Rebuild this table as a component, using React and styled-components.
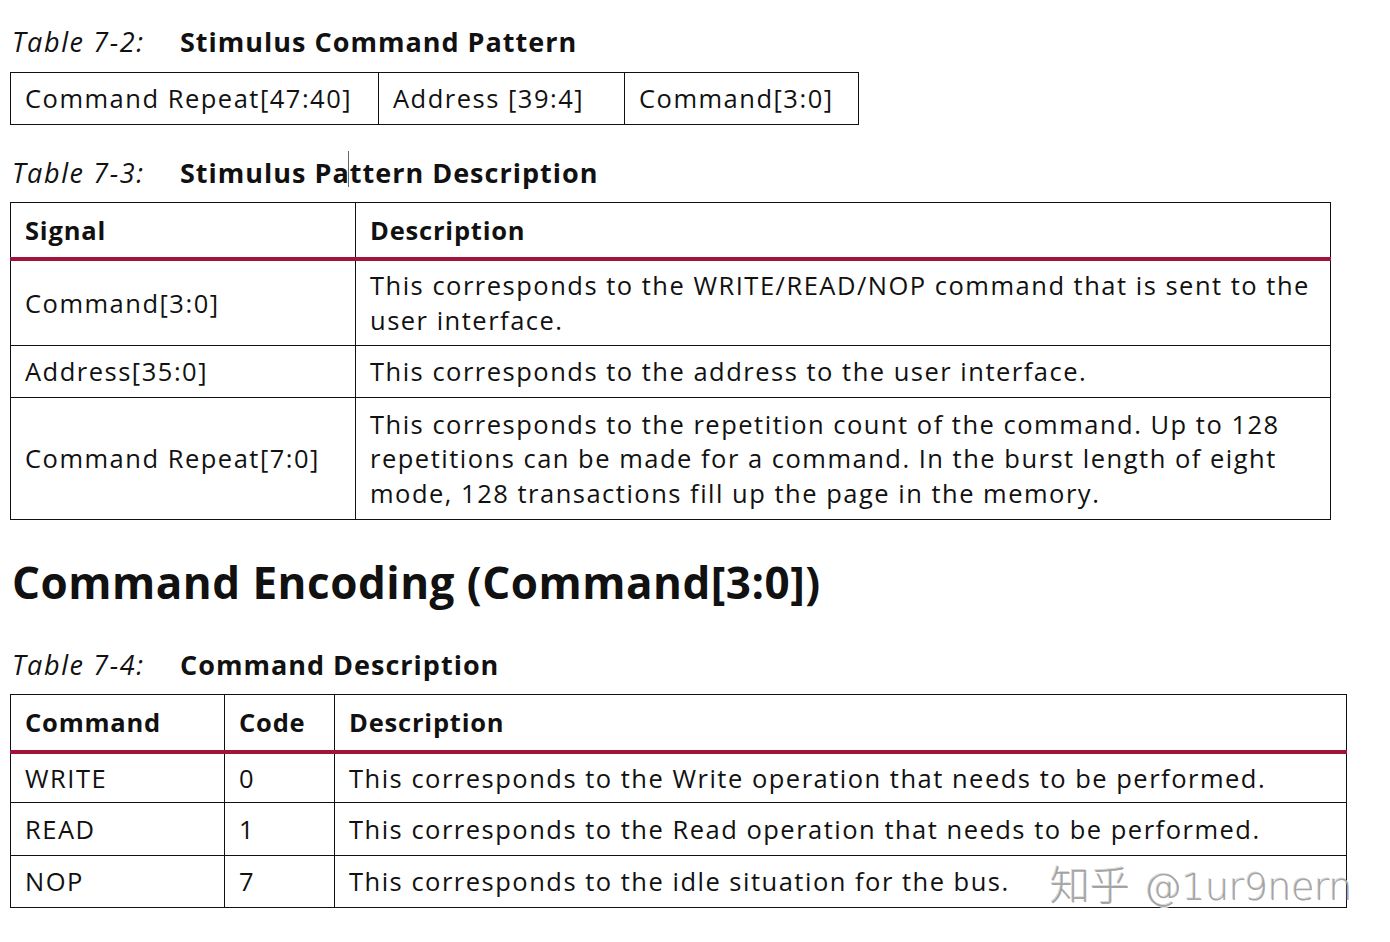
import React from "react";
import styled, { createGlobalStyle } from "styled-components";

const Global = createGlobalStyle`
  html, body { margin: 0; padding: 0; background: #ffffff; }
  body { font-family: "Open Sans", "Noto Sans", sans-serif; color: #111; }
`;

const Page = styled.div`
  position: relative;
  width: 1390px;
  height: 942px;
  box-sizing: border-box;
  padding: 24px 0 0 10px;
  overflow: hidden;
`;

const Caption = styled.div`
  display: flex;
  align-items: baseline;
  height: 36px;
  line-height: 36px;
  margin-top: ${(p) => p.$mt || 0}px;
  padding-left: 2px;
  font-size: 27px;
  position: relative;
`;

const CapNum = styled.span`
  font-style: italic;
  letter-spacing: 1.6px;
  width: 168px;
  flex: none;
`;

const CapTitle = styled.span`
  font-weight: 700;
  letter-spacing: 1px;
`;

const Caret = styled.span`
  position: absolute;
  left: 338px;
  top: -4px;
  width: 1px;
  height: 36px;
  background: #666;
`;

const Table = styled.table`
  border-collapse: collapse;
  table-layout: fixed;
  width: ${(p) => p.$w}px;
  margin-top: ${(p) => p.$mt || 0}px;
  font-size: 25.5px;
  letter-spacing: 1.5px;
`;

const Row = styled.tr`
  height: ${(p) => p.$h}px;
`;

const HeadRow = styled.tr`
  height: ${(p) => p.$h}px;
`;

const Cell = styled.td`
  border: 1px solid #111;
  padding: 0 6px 0 14px;
  vertical-align: middle;
  line-height: 34.5px;
  box-sizing: border-box;
  white-space: nowrap;
`;

const HeadCell = styled(Cell)`
  font-weight: 700;
  letter-spacing: 0.8px;
  border-bottom: 4px solid #a0143c;
`;

const Heading = styled.h1`
  margin: 34px 0 0 2px;
  font-size: 44px;
  line-height: 56px;
  font-weight: 700;
  letter-spacing: 0.5px;
`;

const Watermark = styled.div`
  position: absolute;
  left: 1050px;
  top: 858px;
  font-size: 40px;
  line-height: 50px;
  color: rgba(150, 150, 150, 0.85);
  font-family: "Noto Sans CJK SC", "DejaVu Sans", sans-serif;
  font-weight: 300;
  text-shadow: 1px 1px 0 rgba(255, 255, 255, 0.9), -1px -1px 0 rgba(120,120,120,0.3);
  white-space: nowrap;
  pointer-events: none;
`;

const WmLatin = styled.span`
  font-family: "DejaVu Sans", sans-serif;
  font-weight: 200;
  margin-left: 14px;
  letter-spacing: -0.5px;
  font-size: 38px;
`;

export default function App() {
  return (
    <>
      <Global />
      <Page>
        <Caption>
          <CapNum>Table 7-2:</CapNum>
          <CapTitle>Stimulus Command Pattern</CapTitle>
        </Caption>
        <Table $w={848} $mt={12}>
          <colgroup>
            <col style={{ width: 368 }} />
            <col style={{ width: 246 }} />
            <col style={{ width: 234 }} />
          </colgroup>
          <tbody>
            <Row $h={52}>
              <Cell>Command Repeat[47:40]</Cell>
              <Cell>Address [39:4]</Cell>
              <Cell>Command[3:0]</Cell>
            </Row>
          </tbody>
        </Table>

        <Caption $mt={30}>
          <CapNum>Table 7-3:</CapNum>
          <CapTitle>Stimulus Pattern Description</CapTitle>
          <Caret />
        </Caption>
        <Table $w={1320} $mt={11}>
          <colgroup>
            <col style={{ width: 345 }} />
            <col style={{ width: 975 }} />
          </colgroup>
          <tbody>
            <HeadRow $h={56}>
              <HeadCell>Signal</HeadCell>
              <HeadCell>Description</HeadCell>
            </HeadRow>
            <Row $h={87}>
              <Cell>Command[3:0]</Cell>
              <Cell>
                This corresponds to the WRITE/READ/NOP command that is sent to the
                <br />
                user interface.
              </Cell>
            </Row>
            <Row $h={52}>
              <Cell>Address[35:0]</Cell>
              <Cell>This corresponds to the address to the user interface.</Cell>
            </Row>
            <Row $h={122}>
              <Cell>Command Repeat[7:0]</Cell>
              <Cell>
                This corresponds to the repetition count of the command. Up to 128
                <br />
                repetitions can be made for a command. In the burst length of eight
                <br />
                mode, 128 transactions fill up the page in the memory.
              </Cell>
            </Row>
          </tbody>
        </Table>

        <Heading>Command Encoding (Command[3:0])</Heading>

        <Caption $mt={37}>
          <CapNum>Table 7-4:</CapNum>
          <CapTitle>Command Description</CapTitle>
        </Caption>
        <Table $w={1336} $mt={11}>
          <colgroup>
            <col style={{ width: 214 }} />
            <col style={{ width: 110 }} />
            <col style={{ width: 1012 }} />
          </colgroup>
          <tbody>
            <HeadRow $h={57}>
              <HeadCell>Command</HeadCell>
              <HeadCell>Code</HeadCell>
              <HeadCell>Description</HeadCell>
            </HeadRow>
            <Row $h={51}>
              <Cell>WRITE</Cell>
              <Cell>0</Cell>
              <Cell>This corresponds to the Write operation that needs to be performed.</Cell>
            </Row>
            <Row $h={53}>
              <Cell>READ</Cell>
              <Cell>1</Cell>
              <Cell>This corresponds to the Read operation that needs to be performed.</Cell>
            </Row>
            <Row $h={52}>
              <Cell>NOP</Cell>
              <Cell>7</Cell>
              <Cell>This corresponds to the idle situation for the bus.</Cell>
            </Row>
          </tbody>
        </Table>

        <Watermark>
          知乎<WmLatin>@1ur9nern</WmLatin>
        </Watermark>
      </Page>
    </>
  );
}
